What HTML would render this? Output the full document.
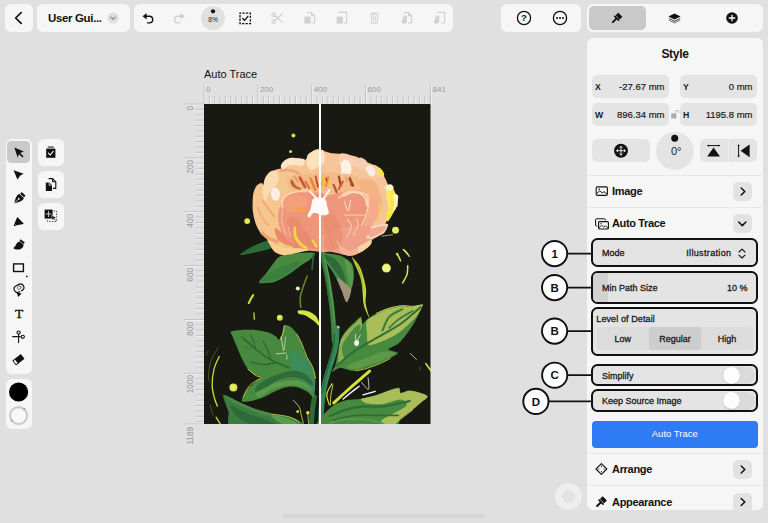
<!DOCTYPE html>
<html lang="en">
<head>
<meta charset="utf-8">
<title>Auto Trace</title>
<style>
*{box-sizing:border-box;margin:0;padding:0}
html,body{width:768px;height:523px;overflow:hidden;background:#e0e0e0;font-family:"Liberation Sans",sans-serif;color:#111}
#app{position:relative;width:768px;height:523px;background:#e0e0e0;overflow:hidden}
.abs{position:absolute}
.pill{position:absolute;background:#f6f6f6;border-radius:6px}
.fld{position:absolute;background:#e4e4e4;border-radius:5px;height:23px;font-size:9.5px;line-height:23px;color:#1a1a1a}
.fld b{position:absolute;left:3px;top:.7px;font-weight:bold;font-size:8.7px}
.fld span{position:absolute;right:4.5px;top:0;white-space:nowrap;-webkit-text-stroke:.2px #1a1a1a}
.sec{position:absolute;left:612px;font-weight:bold;font-size:12px;letter-spacing:-.55px;line-height:14px;white-space:nowrap;color:#111}
.chev{position:absolute;left:733px;width:19px;height:19px;border-radius:5px;background:#e2e2e2}
.sep{position:absolute;left:587px;width:176px;height:1px;background:#e9e9e9}
.box{position:absolute;left:590.8px;width:166.8px;border:2px solid #111;border-radius:6.5px;background:#e4e4e4;overflow:hidden}
.lbl{position:absolute;font-size:9px;line-height:12px;white-space:nowrap;color:#1a1a1a;-webkit-text-stroke:.3px #1a1a1a}
.call{position:absolute;width:27px;height:27px;border-radius:50%;border:1.8px solid #111;background:#fff;font-weight:bold;font-size:11.5px;line-height:24px;text-align:center;color:#111}
.cline{position:absolute;height:1.7px;background:#111}
.rl{position:absolute;font-size:8px;line-height:8px;color:#9a9a9a;white-space:nowrap}
.vl{position:absolute;font-size:8.2px;line-height:8px;color:#959595;white-space:nowrap;transform-origin:100% 0;transform:rotate(-90deg);text-align:right}
</style>
</head>
<body>
<div id="app">
<!-- top toolbar -->
<div class="pill" style="left:5px;top:4px;width:28px;height:28px"></div>
<svg class="abs" style="left:5px;top:4px" width="28" height="28" viewBox="0 0 28 28"><path d="M16.2 8.6 L10.6 14 L16.2 19.4" fill="none" stroke="#111" stroke-width="1.7" stroke-linecap="round" stroke-linejoin="round"/></svg>
<div class="pill" style="left:37px;top:4px;width:92.5px;height:28px"></div>
<div class="abs" style="left:48px;top:10.5px;font-weight:bold;font-size:11.5px;letter-spacing:-.35px;line-height:14px;white-space:nowrap">User Gui...</div>
<svg class="abs" style="left:107px;top:12px" width="12" height="12" viewBox="0 0 12 12"><circle cx="6" cy="6" r="5.6" fill="#dedede"/><path d="M3.7 5.1 L6 7.3 L8.3 5.1" fill="none" stroke="#8d8d8d" stroke-width="1.2" stroke-linecap="round" stroke-linejoin="round"/></svg>

<div class="pill" style="left:134px;top:4px;width:319px;height:28px"></div>
<svg class="abs" style="left:134px;top:4px" width="319" height="28" viewBox="134 4 319 28">
 <!-- undo -->
 <g fill="none" stroke="#111" stroke-width="1.4" stroke-linecap="round" stroke-linejoin="round">
  <path d="M144.6 16.3 H149.4 A3.3 3.3 0 0 1 149.4 22.9 H147.6"/>
 </g>
 <path d="M142.6 16.3 L146.6 13 V19.6 Z" fill="#111"/>
 <!-- redo (disabled) -->
 <g fill="none" stroke="#cdcdcd" stroke-width="1.4" stroke-linecap="round" stroke-linejoin="round">
  <path d="M182.6 16.3 H177.8 A3.3 3.3 0 0 0 177.8 22.9 H179.6"/>
 </g>
 <path d="M184.6 16.3 L180.6 13 V19.6 Z" fill="#cdcdcd"/>
 <!-- zoom -->
 <circle cx="213" cy="18" r="12" fill="#e0e0e0"/>
 <circle cx="213" cy="11.3" r="2.1" fill="#111"/>
 <text x="213" y="22.4" font-size="6.6" text-anchor="middle" fill="#222" font-family="Liberation Sans, sans-serif">8%</text>
 <!-- select all -->
 <rect x="240" y="13.2" width="10.4" height="10.4" fill="none" stroke="#111" stroke-width="1.3" stroke-dasharray="2.3 1.2" stroke-dashoffset="1.1"/>
 <path d="M242.8 18.5 L244.6 20.4 L247.9 16.3" fill="none" stroke="#111" stroke-width="1.3" stroke-linecap="round" stroke-linejoin="round"/>
 <!-- scissors -->
 <g fill="none" stroke="#cfcfcf" stroke-width="1.2" stroke-linecap="round">
  <circle cx="273.6" cy="14.8" r="1.7"/><circle cx="273.6" cy="21.6" r="1.7"/>
  <path d="M275 15.8 L282.3 22.4 M275 20.6 L282.3 13.8"/>
 </g>
 <!-- copy -->
 <g fill="none" stroke="#d2d2d2" stroke-width="1.1" stroke-linejoin="round">
  <path d="M307 12.6 H311.6 L314.6 15.6 V23 H311.4"/>
  <path d="M311.6 12.6 V15.6 H314.6"/>
 </g>
 <path d="M304.4 16.6 H310.6 V23.6 H304.4 Z" fill="#d2d2d2"/>
 <!-- paste -->
 <g fill="none" stroke="#d2d2d2" stroke-width="1.1" stroke-linejoin="round">
  <path d="M338.4 12.4 H346.6 V23 H343.6"/>
 </g>
 <path d="M336.6 16.6 H342.8 V23.6 H336.6 Z" fill="#d2d2d2"/>
 <!-- trash -->
 <g fill="none" stroke="#d6d6d6" stroke-width="1.1" stroke-linejoin="round" stroke-linecap="round">
  <path d="M370.4 14.4 H378.4 M372.6 14.2 V12.8 H376.2 V14.2"/>
  <path d="M371 14.6 L371.6 23.4 H377.2 L377.8 14.6"/>
  <path d="M373.3 16.6 V21.4 M375.5 16.6 V21.4"/>
 </g>
 <!-- paste style 1 -->
 <g fill="none" stroke="#d2d2d2" stroke-width="1.1" stroke-linejoin="round">
  <path d="M404 12.6 H408.6 L411.6 15.6 V23 H408"/>
  <path d="M408.6 12.6 V15.6 H411.6"/>
 </g>
 <circle cx="404.2" cy="21" r="2.6" fill="#cfcfcf"/><path d="M403 15.6 h4 v5 h-4z" fill="#d4d4d4"/>
 <!-- paste style 2 -->
 <g fill="none" stroke="#d2d2d2" stroke-width="1.1" stroke-linejoin="round">
  <path d="M437 12.4 H444.6 V23 H441"/>
 </g>
 <circle cx="436.6" cy="21" r="2.6" fill="#cfcfcf"/><path d="M435.4 15.6 h4 v5 h-4z" fill="#d4d4d4"/>
</svg>

<div class="pill" style="left:501px;top:4px;width:80px;height:28px"></div>
<svg class="abs" style="left:501px;top:4px" width="80" height="28" viewBox="501 4 80 28">
 <circle cx="524" cy="18" r="6.6" fill="none" stroke="#111" stroke-width="1.3"/>
 <text x="524" y="21.3" font-size="9.5" font-weight="bold" text-anchor="middle" fill="#111" font-family="Liberation Sans, sans-serif">?</text>
 <circle cx="560" cy="18" r="6.6" fill="none" stroke="#111" stroke-width="1.3"/>
 <circle cx="557" cy="18" r="1" fill="#111"/><circle cx="560" cy="18" r="1" fill="#111"/><circle cx="563" cy="18" r="1" fill="#111"/>
</svg>

<div class="pill" style="left:587px;top:4px;width:176px;height:28px"></div>
<div class="abs" style="left:589px;top:6px;width:57px;height:24px;border-radius:5px;background:#c9c9c9"></div>
<svg class="abs" style="left:587px;top:4px" width="176" height="28" viewBox="587 4 176 28">
 <!-- brush -->
 <g transform="translate(616.8 18.2) rotate(45) scale(.8)">
  <path d="M-3.6 -6.2 H3.6 V-1.4 H-3.6 Z" fill="#111"/>
  <path d="M-4.2 -0.8 H4.2 V1.2 H1.2 V7 A1.2 1.2 0 0 1 -1.2 7 V1.2 H-4.2 Z" fill="#111"/>
 </g>
 <!-- layers -->
 <path d="M674.5 13.6 L680.6 16.6 L674.5 19.6 L668.4 16.6 Z" fill="#111"/>
 <path d="M669.4 18.3 L674.5 20.8 L679.6 18.3 L680.6 18.8 L674.5 21.8 L668.4 18.8 Z" fill="#333"/>
 <path d="M669.4 19.9 L674.5 22.4 L679.6 19.9 L680.6 20.4 L674.5 23.4 L668.4 20.4 Z" fill="#777"/>
 <!-- plus -->
 <circle cx="732" cy="18" r="5.8" fill="#111"/>
 <path d="M732 15.2 V20.8 M729.2 18 H734.8" stroke="#fff" stroke-width="1.3" stroke-linecap="round"/>
</svg>
<!-- left toolbar -->
<div class="pill" style="left:5.5px;top:138.5px;width:26px;height:235px;border-radius:6px"></div>
<div class="abs" style="left:7px;top:140.5px;width:23px;height:22.5px;border-radius:4.5px;background:#c9c9c9"></div>
<svg class="abs" style="left:5px;top:138px" width="28" height="236" viewBox="5 138 28 236">
 <!-- select arrow -->
 <path d="M14.4 147.4 L23.8 151.6 L20.2 153 L23.6 156.6 L22.6 157.6 L19 154.2 L17.6 157.4 Z" fill="#111"/>
 <!-- direct select -->
 <path d="M13.6 170.3 L23.6 173.8 L20.3 175.6 L17.4 179.6 Z" fill="#111"/>
 <!-- pen -->
 <g transform="translate(19 198.6) rotate(45)">
  <path d="M-2.6 -6.6 H2.6 V-4.4 H-2.6 Z" fill="#111"/>
  <path d="M-3.3 -3.7 H3.3 C4.2 -0.6 2.6 3.2 0 6.6 C-2.6 3.2 -4.2 -0.6 -3.3 -3.7 Z" fill="#111"/>
  <path d="M0 6 V1.4" stroke="#f5f5f5" stroke-width=".8"/><circle cx="0" cy="0.4" r="1" fill="#f5f5f5"/>
 </g>
 <!-- node tool -->
 <g transform="translate(6 186) scale(.134)">
  <path d="M84 232 L128 276 L132 284 L80 292 L62 300 L58 292 Z" fill="#111"/>
  <path d="M66 282 L74 290" stroke="#f5f5f5" stroke-width="4"/>
 </g>
 <!-- blob brush -->
 <g transform="translate(6 186) scale(.134)">
  <path d="M54 462 C70 455 72 440 82 426 C92 412 110 412 122 424 C136 438 132 458 114 468 C96 478 66 476 54 462 Z" fill="#111"/>
  <path d="M108 398 L140 420 L132 432 L100 410 Z" fill="#111"/>
  <path d="M100 412 L128 432" stroke="#f5f5f5" stroke-width="3.5"/>
 </g>
 <!-- rectangle -->
 <rect x="13.6" y="263.9" width="9.8" height="7.6" fill="none" stroke="#111" stroke-width="1.4"/>
 <circle cx="26.9" cy="276.4" r=".9" fill="#222"/>
 <!-- lasso -->
 <g fill="none" stroke="#111" stroke-width="1.2" stroke-linecap="round" stroke-linejoin="round">
  <g transform="translate(18.9 288.2) rotate(-28)"><path d="M-1 3.4 H-1.6 A3.4 3.4 0 0 1 -1.6 -3.4 H1.8 A3.4 3.4 0 0 1 1.8 3.4 H1.2"/><ellipse cx="0.6" cy="-.3" rx="2" ry="1.5" stroke-width=".8" stroke="#555"/></g>
 </g>
 <path d="M16.6 292.2 L21.6 293.4 L18.2 297 Z" fill="#111"/>
 <!-- text -->
 <text x="19" y="318.3" font-family="Liberation Serif, serif" font-size="13.5" text-anchor="middle" fill="#111" stroke="#111" stroke-width=".35">T</text>
 <!-- scissors tool -->
 <g fill="none" stroke="#111" stroke-width="1.1" stroke-linecap="round">
  <path d="M12.6 336.6 H19 M18.6 337 V342.6"/>
  <circle cx="18.6" cy="332.6" r="1.6"/><circle cx="22.8" cy="336.8" r="1.6"/>
  <path d="M18.6 334.4 V336.4 M21 336.8 H19"/>
 </g>
 <!-- eraser -->
 <g transform="translate(18.4 359.8) rotate(-38)">
  <path d="M-5.4 -3 H5.4 V3 H-5.4 Z" fill="#111"/>
  <path d="M-4.6 -2.1 H-2.6 V2.1 H-4.6 Z" fill="#f5f5f5"/>
 </g>
</svg>
<!-- secondary buttons -->
<div class="pill" style="left:37.5px;top:138.5px;width:26.5px;height:27px;border-radius:6px"></div>
<div class="pill" style="left:37.5px;top:170.5px;width:26.5px;height:27px;border-radius:6px"></div>
<div class="pill" style="left:37.5px;top:202.5px;width:26.5px;height:27px;border-radius:6px"></div>
<svg class="abs" style="left:37px;top:138px" width="28" height="92" viewBox="37 138 28 92">
 <!-- paste in place -->
 <path d="M46.2 148.6 H55.4 V157.8 H46.2 Z" fill="#111"/>
 <path d="M47.8 146.2 H53.8 V148 H47.8 Z" fill="#777"/>
 <path d="M48.4 153.2 L50.2 155 L53.2 151.4" fill="none" stroke="#fff" stroke-width="1.1" stroke-linecap="round" stroke-linejoin="round"/>
 <!-- duplicate -->
 <g fill="none" stroke="#111" stroke-width="1.1" stroke-linejoin="round">
  <path d="M48.6 178.6 H52.6 L55.8 181.8 V188.4 H53"/>
  <path d="M52.6 178.6 V181.8 H55.8"/>
 </g>
 <path d="M45.8 182.4 H49.4 L52 185 V191 H45.8 Z" fill="#111"/>
 <path d="M49.2 182.6 V185.2 H51.8" fill="none" stroke="#f5f5f5" stroke-width=".8"/>
 <!-- select same -->
 <path d="M44.6 209.6 H52.6 V218.6 H44.6 Z" fill="#111"/>
 <path d="M48.6 211 V217 M45.8 214 H51.4" stroke="#f5f5f5" stroke-width=".8"/>
 <path d="M53.6 211 H56.6 V221.6 H47.6 V219.6" fill="none" stroke="#555" stroke-width="1" stroke-dasharray="1.6 1.2"/>
 <path d="M51.4 215.4 L56.4 217.4 L54.4 218.2 L55.8 220 L55 220.6 L53.6 218.8 L52.4 220.2 Z" fill="#111" stroke="#f5f5f5" stroke-width=".4"/>
</svg>
<!-- colour wells -->
<div class="pill" style="left:5.5px;top:379px;width:26px;height:50px;border-radius:6px"></div>
<svg class="abs" style="left:5px;top:379px" width="28" height="50" viewBox="5 379 28 50">
 <circle cx="18.6" cy="392" r="9.6" fill="#000"/>
 <circle cx="18.6" cy="415.6" r="8.5" fill="#f8f8f8" stroke="#cbcbcb" stroke-width="2.1"/>
 <path d="M23.6 408.6 A8.5 8.5 0 0 1 24.8 409.8" fill="none" stroke="#c98a8a" stroke-width="2.1"/>
 <path d="M12.2 421.2 A8.5 8.5 0 0 1 11.4 420.2" fill="none" stroke="#c98a8a" stroke-width="2.1"/>
</svg>
<!-- right panel -->
<div class="abs" style="left:587px;top:38px;width:176px;height:472px;background:#f6f6f6;border-radius:6px"></div>
<div class="abs" style="left:587px;top:46.5px;width:176px;text-align:center;font-weight:bold;font-size:12px;letter-spacing:-.3px;line-height:14px">Style</div>
<div class="fld" style="left:592px;top:75px;width:77px"><b>X</b><span>-27.67 mm</span></div>
<div class="fld" style="left:680px;top:75px;width:77px"><b>Y</b><span>0 mm</span></div>
<div class="fld" style="left:592px;top:103px;width:77px"><b>W</b><span>896.34 mm</span></div>
<div class="fld" style="left:680px;top:103px;width:77px"><b>H</b><span>1195.8 mm</span></div>
<svg class="abs" style="left:669px;top:107.9px" width="11" height="13" viewBox="0 0 11 13"><path d="M2.2 5.4 H7.4 V10.5 H2.2 Z" fill="#adadad"/><path d="M6.4 5.2 V4.2 A1.7 1.7 0 0 1 9.8 4 V4.8" fill="none" stroke="#b8b8b8" stroke-width=".9"/></svg>
<div class="abs" style="left:592px;top:139px;width:58px;height:23px;border-radius:5px;background:#e4e4e4"></div>
<div class="abs" style="left:655.5px;top:131.5px;width:38.5px;height:38.5px;border-radius:50%;background:#e4e4e4"></div>
<div class="abs" style="left:699.5px;top:139px;width:57.5px;height:23px;border-radius:5px;background:#e4e4e4"></div>
<div class="abs" style="left:728px;top:139px;width:1px;height:23px;background:#ededed"></div>
<div class="abs" style="left:657px;top:144.5px;width:38.5px;text-align:center;font-size:11px;line-height:13px;color:#222">0°</div>
<svg class="abs" style="left:587px;top:130px" width="176" height="42" viewBox="587 130 176 42">
 <circle cx="621" cy="150.7" r="7" fill="#111"/>
 <g fill="none" stroke="#f5f5f5" stroke-width=".9" stroke-linecap="round" stroke-linejoin="round">
  <path d="M621 146.4 V155 M616.7 150.7 H625.3"/>
  <path d="M619.8 147.5 L621 146.3 L622.2 147.5 M619.8 153.9 L621 155.1 L622.2 153.9 M617.9 149.5 L616.7 150.7 L617.9 151.9 M624.1 149.5 L625.3 150.7 L624.1 151.9"/>
 </g>
 <circle cx="674.7" cy="138.2" r="3.5" fill="#111"/>
 <!-- flip vertical -->
 <path d="M713.6 147.6 L720 156.6 H707.2 Z" fill="#111"/>
 <path d="M707.6 145.6 H719.6" stroke="#111" stroke-width="1"/>
 <path d="M707 145.6 L708.8 144.4 V146.8 Z M720.2 145.6 L718.4 144.4 V146.8 Z" fill="#111"/>
 <!-- flip horizontal -->
 <path d="M740.6 150.8 L749.6 144.4 V157.2 Z" fill="#111"/>
 <path d="M738.6 145 V156.8" stroke="#111" stroke-width="1"/>
 <path d="M738.6 144.2 L737.4 146 H739.8 Z M738.6 157.4 L737.4 155.6 H739.8 Z" fill="#111"/>
</svg>
<div class="sep" style="top:175px"></div>
<svg class="abs" style="left:594px;top:185px" width="16" height="12" viewBox="594 185 16 12"><rect x="596.2" y="186.9" width="11.2" height="8.5" rx="1.2" fill="none" stroke="#111" stroke-width="1.1"/><path d="M596.6 193.6 L599.8 190.8 L602.2 193 L604 191.6 L607.2 194.2" fill="none" stroke="#111" stroke-width="1"/><circle cx="599.2" cy="189.2" r=".8" fill="#111"/></svg>
<div class="sec" style="top:184px;font-size:11px;letter-spacing:-.3px">Image</div>
<div class="chev" style="top:182px"></div>
<div class="sep" style="top:207px"></div>
<svg class="abs" style="left:594px;top:217px" width="16" height="14" viewBox="594 217 16 14"><path d="M597.4 226 H596.4 A.8 .8 0 0 1 595.6 225.2 V219.6 A.8 .8 0 0 1 596.4 218.8 H604.6 A.8 .8 0 0 1 605.4 219.6 V220.4" fill="none" stroke="#111" stroke-width="1"/><rect x="598.6" y="221.6" width="9.8" height="7.4" rx="1" fill="none" stroke="#111" stroke-width="1.1"/><path d="M599 227.6 L601.6 225.2 L603.6 227 L605.2 225.8 L608 228" fill="none" stroke="#111" stroke-width=".9"/><circle cx="601" cy="223.6" r=".7" fill="#111"/></svg>
<div class="sec" style="top:216px;font-size:11px;letter-spacing:-.35px">Auto Trace</div>
<div class="chev" style="top:214px"></div>
<svg class="abs" style="left:733px;top:182px" width="19" height="51" viewBox="733 182 19 51" fill="none" stroke="#111" stroke-width="1.5" stroke-linecap="round" stroke-linejoin="round"><path d="M741.2 188 L744.8 191.5 L741.2 195"/><path d="M738.7 222 L742.3 225.6 L745.9 222"/></svg>

<div class="box" style="top:238.4px;height:29.1px"></div>
<div class="lbl" style="left:602px;top:247.1px">Mode</div>
<div class="lbl" style="right:36.6px;top:247.1px;letter-spacing:.35px">Illustration</div>
<svg class="abs" style="left:736px;top:247px" width="12" height="13" viewBox="0 0 12 13" fill="none" stroke="#111" stroke-width="1.1" stroke-linecap="round" stroke-linejoin="round"><path d="M3 5 L6 2.2 L9 5 M3 8.2 L6 11 L9 8.2"/></svg>

<div class="box" style="top:270.5px;height:33.6px"><i style="position:absolute;left:0;top:0;bottom:0;width:15.5px;background:#d2d2d2"></i></div>
<div class="lbl" style="left:602px;top:281.5px">Min Path Size</div>
<div class="lbl" style="right:20.5px;top:281.5px">10 %</div>

<div class="box" style="top:307.3px;height:48.6px"></div>
<div class="lbl" style="left:596.3px;top:312.5px;letter-spacing:.1px">Level of Detail</div>
<div class="abs" style="left:596.5px;top:327px;width:156px;height:22.5px;border-radius:4px;background:#dcdcdc"></div>
<div class="abs" style="left:649px;top:327px;width:52px;height:22.5px;border-radius:3px;background:#cdcdcd"></div>
<div class="lbl" style="left:596.5px;width:52.5px;top:332.5px;text-align:center">Low</div>
<div class="lbl" style="left:649px;width:52px;top:332.5px;text-align:center">Regular</div>
<div class="lbl" style="left:701px;width:52px;top:332.5px;text-align:center">High</div>

<div class="box" style="top:364.1px;height:22.2px"></div>
<div class="lbl" style="left:602px;top:369.5px">Simplify</div>
<div class="abs" style="left:721.5px;top:366.5px;width:33.5px;height:17.5px;border-radius:9px;background:#dadada"></div>
<div class="abs" style="left:722.5px;top:366.8px;width:17px;height:17px;border-radius:50%;background:#fdfdfd;box-shadow:0 .5px 1.5px rgba(0,0,0,.18)"></div>
<div class="box" style="top:389.2px;height:22.8px"></div>
<div class="lbl" style="left:602px;top:395px">Keep Source Image</div>
<div class="abs" style="left:721.5px;top:392px;width:33.5px;height:17.5px;border-radius:9px;background:#dadada"></div>
<div class="abs" style="left:722.5px;top:392.3px;width:17px;height:17px;border-radius:50%;background:#fdfdfd;box-shadow:0 .5px 1.5px rgba(0,0,0,.18)"></div>

<div class="abs" style="left:592px;top:421px;width:165.5px;height:26.5px;border-radius:4px;background:#2f7bf6;color:#fff;font-size:9.5px;line-height:26.5px;text-align:center">Auto Trace</div>
<div class="sep" style="top:453px"></div>
<svg class="abs" style="left:594px;top:462px" width="16" height="14" viewBox="594 462 16 14"><path d="M601.4 463.6 L606.8 469 L601.4 474.4 L596 469 Z" fill="none" stroke="#111" stroke-width="1.1" stroke-linejoin="round"/><g fill="#111"><circle cx="601.4" cy="466.4" r=".6"/><circle cx="601.4" cy="471.6" r=".6"/><circle cx="598.8" cy="469" r=".6"/><circle cx="604" cy="469" r=".6"/></g></svg>
<div class="sec" style="top:462px;font-size:11px;letter-spacing:-.3px">Arrange</div>
<div class="chev" style="top:460px"></div>
<div class="sep" style="top:485px"></div>
<svg class="abs" style="left:594px;top:495px" width="16" height="14" viewBox="594 495 16 14"><g transform="translate(601.2 502) rotate(45) scale(.82)"><path d="M-3.6 -6.2 H3.6 V-1.4 H-3.6 Z" fill="#111"/><path d="M-4.2 -0.8 H4.2 V1.2 H1.2 V7 A1.2 1.2 0 0 1 -1.2 7 V1.2 H-4.2 Z" fill="#111"/></g></svg>
<div class="sec" style="top:494.5px;font-size:11px;letter-spacing:-.3px">Appearance</div>
<div class="chev" style="top:492.5px"></div>
<svg class="abs" style="left:733px;top:460px" width="19" height="52" viewBox="733 460 19 52" fill="none" stroke="#111" stroke-width="1.5" stroke-linecap="round" stroke-linejoin="round"><path d="M741.2 466 L744.8 469.5 L741.2 473"/><path d="M741.2 498.5 L744.8 502 L741.2 505.5"/></svg>

<!-- callouts -->
<svg class="abs" style="left:520px;top:236px" width="74" height="182" viewBox="520 236 74 182">
 <g stroke="#111" stroke-width="1.7" fill="none">
  <path d="M567 253.6H592M567 287.6H592M567 331.1H592M567 375.2H592M549 401.4H592"/>
 </g>
 <g stroke="#111" stroke-width="1.9" fill="#fff">
  <circle cx="554.6" cy="253.6" r="12.6"/><circle cx="554.6" cy="287.6" r="12.6"/><circle cx="554.6" cy="331.1" r="12.6"/><circle cx="554.7" cy="375.2" r="12.6"/><circle cx="535.9" cy="401.4" r="12.6"/>
 </g>
 <g font-family="Liberation Sans, sans-serif" font-weight="bold" font-size="11.5" text-anchor="middle" fill="#111">
  <text x="554.6" y="257.7">1</text><text x="554.6" y="291.7">B</text><text x="554.6" y="335.2">B</text><text x="554.7" y="379.3">C</text><text x="535.9" y="405.5">D</text>
 </g>
</svg>
<!-- joystick -->
<div class="abs" style="left:554.5px;top:483px;width:27px;height:27px;border-radius:50%;background:#eeeeee"></div>
<div class="abs" style="left:561.5px;top:490px;width:13px;height:13px;border-radius:50%;background:#e2e2e2"></div>
<!-- scroll bar -->
<div class="abs" style="left:282px;top:513.8px;width:203px;height:4px;border-radius:2px;background:#d6d6d6"></div>
<!-- rulers -->
<div class="abs" style="left:204px;top:67px;font-size:11px;line-height:14px;color:#111;white-space:nowrap">Auto Trace</div>
<svg class="abs" style="left:180px;top:80px" width="270" height="372" viewBox="180 80 270 372"><path d="M204.00 84.5V104M209.39 96V104M214.77 96V104M220.16 96V104M225.55 96V104M230.93 96V104M236.32 96V104M241.71 96V104M247.09 96V104M252.48 96V104M257.86 84.5V104M263.25 96V104M268.64 96V104M274.02 96V104M279.41 96V104M284.80 96V104M290.18 96V104M295.57 96V104M300.96 96V104M306.34 96V104M311.73 84.5V104M317.12 96V104M322.50 96V104M327.89 96V104M333.27 96V104M338.66 96V104M344.05 96V104M349.43 96V104M354.82 96V104M360.21 96V104M365.59 84.5V104M370.98 96V104M376.37 96V104M381.75 96V104M387.14 96V104M392.53 96V104M397.91 96V104M403.30 96V104M408.68 96V104M414.07 96V104M419.46 96V104M424.84 96V104M430.23 96V104M430.50 84.5V104M184 104.00H204M196 109.39H204M196 114.77H204M196 120.16H204M196 125.55H204M196 130.93H204M196 136.32H204M196 141.71H204M196 147.09H204M196 152.48H204M184 157.86H204M196 163.25H204M196 168.64H204M196 174.02H204M196 179.41H204M196 184.80H204M196 190.18H204M196 195.57H204M196 200.96H204M196 206.34H204M184 211.73H204M196 217.12H204M196 222.50H204M196 227.89H204M196 233.27H204M196 238.66H204M196 244.05H204M196 249.43H204M196 254.82H204M196 260.21H204M184 265.59H204M196 270.98H204M196 276.37H204M196 281.75H204M196 287.14H204M196 292.53H204M196 297.91H204M196 303.30H204M196 308.68H204M196 314.07H204M184 319.46H204M196 324.84H204M196 330.23H204M196 335.62H204M196 341.00H204M196 346.39H204M196 351.78H204M196 357.16H204M196 362.55H204M196 367.94H204M184 373.32H204M196 378.71H204M196 384.10H204M196 389.48H204M196 394.87H204M196 400.25H204M196 405.64H204M196 411.03H204M196 416.41H204M196 421.80H204M184 424.00H204" transform="translate(.8 .8)" stroke="#f4f4f4" stroke-width="1" fill="none"/><path d="M204.00 84.5V104M209.39 96V104M214.77 96V104M220.16 96V104M225.55 96V104M230.93 96V104M236.32 96V104M241.71 96V104M247.09 96V104M252.48 96V104M257.86 84.5V104M263.25 96V104M268.64 96V104M274.02 96V104M279.41 96V104M284.80 96V104M290.18 96V104M295.57 96V104M300.96 96V104M306.34 96V104M311.73 84.5V104M317.12 96V104M322.50 96V104M327.89 96V104M333.27 96V104M338.66 96V104M344.05 96V104M349.43 96V104M354.82 96V104M360.21 96V104M365.59 84.5V104M370.98 96V104M376.37 96V104M381.75 96V104M387.14 96V104M392.53 96V104M397.91 96V104M403.30 96V104M408.68 96V104M414.07 96V104M419.46 96V104M424.84 96V104M430.23 96V104M430.50 84.5V104M184 104.00H204M196 109.39H204M196 114.77H204M196 120.16H204M196 125.55H204M196 130.93H204M196 136.32H204M196 141.71H204M196 147.09H204M196 152.48H204M184 157.86H204M196 163.25H204M196 168.64H204M196 174.02H204M196 179.41H204M196 184.80H204M196 190.18H204M196 195.57H204M196 200.96H204M196 206.34H204M184 211.73H204M196 217.12H204M196 222.50H204M196 227.89H204M196 233.27H204M196 238.66H204M196 244.05H204M196 249.43H204M196 254.82H204M196 260.21H204M184 265.59H204M196 270.98H204M196 276.37H204M196 281.75H204M196 287.14H204M196 292.53H204M196 297.91H204M196 303.30H204M196 308.68H204M196 314.07H204M184 319.46H204M196 324.84H204M196 330.23H204M196 335.62H204M196 341.00H204M196 346.39H204M196 351.78H204M196 357.16H204M196 362.55H204M196 367.94H204M184 373.32H204M196 378.71H204M196 384.10H204M196 389.48H204M196 394.87H204M196 400.25H204M196 405.64H204M196 411.03H204M196 416.41H204M196 421.80H204M184 424.00H204" stroke="#bdbdbd" stroke-width=".8" fill="none"/></svg>
<div class="rl" style="left:206.0px;top:85.5px">0</div>
<div class="rl" style="left:259.9px;top:85.5px">200</div>
<div class="rl" style="left:313.7px;top:85.5px">400</div>
<div class="rl" style="left:367.6px;top:85.5px">600</div>
<div class="rl" style="left:432.5px;top:85.5px">841</div>
<div class="vl" style="right:581.0px;top:106.0px">0</div>
<div class="vl" style="right:581.0px;top:159.9px">200</div>
<div class="vl" style="right:581.0px;top:213.7px">400</div>
<div class="vl" style="right:581.0px;top:267.6px">600</div>
<div class="vl" style="right:581.0px;top:321.5px">800</div>
<div class="vl" style="right:581.0px;top:375.3px">1000</div>
<div class="vl" style="right:581.0px;top:427.0px">1189</div>
<!-- artboard -->
<svg class="abs" style="left:204px;top:104px" width="226.5" height="320" viewBox="204 104 226.5 320">
<rect x="204" y="104" width="226.5" height="320" fill="#191914"/>
<path d="M240.2 254.8C239.9 254.0 245.6 250.5 248.8 248.6C251.9 246.7 255.5 244.8 259.1 243.4C262.7 242.1 268.0 239.8 270.3 240.3C272.6 240.9 274.2 245.2 272.9 246.9C271.6 248.6 266.3 249.6 262.5 250.7C258.8 251.8 254.2 252.7 250.5 253.4C246.8 254.1 240.4 255.6 240.2 254.8Z" fill="#2c6b38"/>
<path d="M259.1 282.2C259.1 280.6 263.7 276.6 266.0 273.6C268.3 270.6 270.6 267.0 272.9 264.1C275.2 261.2 276.3 258.1 279.8 256.4C283.2 254.6 287.8 254.3 293.5 253.8C299.3 253.2 311.3 252.1 314.2 252.9C317.1 253.8 313.0 256.8 310.7 258.9C308.5 261.1 303.9 263.4 300.4 265.8C297.0 268.3 294.1 271.0 290.1 273.6C286.1 276.2 280.3 279.7 276.3 281.3C272.3 282.9 268.9 282.9 266.0 283.0C263.1 283.2 259.1 283.8 259.1 282.2Z" fill="#47893f"/>
<path d="M260.8 281.3C260.0 280.0 268.9 273.6 272.9 271.0C276.9 268.4 280.3 267.5 284.9 265.8C289.5 264.1 299.0 260.1 300.4 260.7C301.9 261.2 297.3 266.3 293.5 269.3C289.8 272.3 283.5 276.7 278.0 278.7C272.6 280.7 261.7 282.6 260.8 281.3Z" fill="#3a7f3e"/>
<path d="M321.8 253.4C323.0 252.1 330.9 253.8 334.2 254.3C337.5 254.9 341.1 255.6 343.8 257.2C346.5 258.8 350.9 261.7 352.4 264.9C353.9 268.0 354.0 274.2 353.8 278.2C353.5 282.3 351.9 288.0 350.9 291.6C349.8 295.2 348.0 302.6 346.7 302.3C345.3 302.1 343.8 293.9 341.9 289.7C340.0 285.5 336.5 278.4 334.2 274.4C332.0 270.4 328.5 266.1 326.6 262.9C324.7 259.8 320.7 254.7 321.8 253.4Z" fill="#47893f"/>
<path d="M337.1 278.2C337.7 277.3 343.2 281.8 345.3 283.6C347.4 285.4 350.9 287.3 351.1 290.1C351.3 292.9 348.1 302.3 346.7 302.3C345.2 302.3 342.9 293.7 341.5 290.1C340.1 286.5 336.5 279.2 337.1 278.2Z" fill="#a3917a"/>
<path d="M322.4 254.5C323.0 253.5 331.0 256.0 334.2 258.4C337.5 260.7 339.9 264.6 341.9 268.7C343.9 272.8 346.6 281.8 346.1 283.0C345.6 284.3 341.6 279.4 339.0 276.3C336.4 273.3 333.2 268.5 330.4 264.9C327.7 261.2 321.8 255.6 322.4 254.5Z" fill="#2c6b38"/>
<path d="M344.8 259.1C345.7 259.0 350.5 262.6 351.8 265.8C353.2 269.0 353.1 274.6 353.0 278.2C352.9 281.9 351.9 287.8 351.1 287.8C350.2 287.8 348.8 281.8 348.0 278.2C347.2 274.7 346.6 270.0 346.1 266.8C345.6 263.6 343.8 259.3 344.8 259.1Z" fill="#5a9a4c"/>
<path d="M322.4 253.4C322.8 255.3 323.8 260.7 324.7 264.9C325.5 269.0 326.4 271.9 327.6 278.2C328.7 284.6 330.4 295.8 331.4 303.1C332.3 310.4 332.8 315.9 333.3 322.2C333.8 328.6 334.1 338.2 334.2 341.4" fill="none" stroke="#3f8442" stroke-width="4.8" stroke-linecap="round" stroke-linejoin="round"/>
<path d="M320.9 255.3C321.2 257.2 322.3 262.8 323.2 266.8C324.0 270.8 324.8 273.1 325.8 279.2C326.9 285.3 328.9 299.1 329.5 303.1" fill="none" stroke="#2c6b38" stroke-width="1.4" stroke-linecap="round" stroke-linejoin="round"/>
<path d="M324.7 259.1C325.4 262.3 327.6 270.9 328.9 278.2C330.2 285.6 331.8 295.8 332.7 303.1C333.7 310.4 334.3 319.0 334.6 322.2" fill="none" stroke="#62a352" stroke-width="1.0" stroke-linecap="round" stroke-linejoin="round"/>
<path d="M336.7 328.1C336.6 330.8 336.7 339.3 335.9 344.3C335.2 349.4 333.6 353.8 332.3 358.5C330.9 363.2 329.2 368.0 327.8 372.7C326.5 377.4 325.2 381.5 324.2 386.9C323.1 392.3 322.3 398.9 321.7 405.1C321.1 411.4 320.7 421.2 320.5 424.4" fill="none" stroke="#34875a" stroke-width="5.5" stroke-linecap="round" stroke-linejoin="round"/>
<path d="M334.3 334.2C334.1 336.6 333.8 344.0 333.1 348.4C332.3 352.8 331.1 355.8 329.8 360.5C328.6 365.3 326.7 371.4 325.4 376.8C324.1 382.2 322.7 390.3 322.1 393.0" fill="none" stroke="#2c6b38" stroke-width="1.8" stroke-linecap="round" stroke-linejoin="round"/>
<path d="M314.5 397.0C314.1 399.1 313.0 404.6 312.5 409.2C311.9 413.8 311.6 421.9 311.4 424.4" fill="none" stroke="#2c6b38" stroke-width="5" stroke-linecap="round" stroke-linejoin="round"/>
<path d="M307.1 276.3C306.4 278.2 304.0 284.3 302.9 287.8C301.7 291.3 300.6 294.1 300.2 297.4C299.9 300.6 300.7 305.7 300.8 307.3" fill="none" stroke="#6a8a30" stroke-width="1.5" stroke-linecap="round" stroke-linejoin="round"/>
<path d="M313.6 253.4C313.5 254.7 313.1 258.4 312.8 261.0C312.6 263.7 312.2 267.7 312.1 269.1" fill="none" stroke="#2c6b38" stroke-width="1.6" stroke-linecap="round" stroke-linejoin="round"/>
<path d="M319.6 149.6C318.5 148.2 314.4 150.1 312.8 151.0C311.2 151.9 310.0 154.3 308.9 155.6C307.8 156.9 306.9 159.3 305.4 159.7C304.0 160.1 301.2 158.4 299.0 158.3C296.8 158.3 293.1 158.7 291.0 159.3C288.9 159.8 286.6 160.9 285.3 162.2C283.9 163.5 283.3 166.9 282.1 168.0C280.8 169.0 279.0 168.7 277.2 169.3C275.5 170.0 272.0 170.8 270.4 172.1C268.7 173.4 267.4 175.9 266.5 177.8C265.5 179.7 265.0 184.1 264.2 184.9C263.4 185.7 262.3 183.0 261.2 183.1C260.1 183.2 257.7 184.5 256.6 185.8C255.5 187.2 254.2 190.0 253.6 192.3C253.0 194.5 252.8 198.1 252.7 200.7C252.6 203.4 252.5 207.2 252.7 209.9C253.0 212.7 253.7 216.5 254.3 219.1C255.0 221.7 256.1 225.0 257.1 227.1C258.0 229.2 259.2 231.3 260.5 232.8C261.8 234.4 264.3 235.9 265.8 237.4C267.3 239.0 269.3 241.4 270.4 243.2C271.4 244.9 271.6 247.4 272.7 248.9C273.7 250.3 275.5 251.9 277.2 252.8C279.0 253.6 281.9 254.5 284.1 254.6C286.3 254.7 289.7 253.9 292.1 253.5C294.5 253.0 297.6 252.1 300.2 251.6C302.7 251.2 306.4 250.6 309.3 250.5C312.3 250.4 318.0 252.4 319.6 250.9C321.3 249.5 320.4 254.4 320.6 240.9C320.7 227.3 320.7 174.3 320.6 160.6C320.4 146.9 320.8 151.1 319.6 149.6Z" fill="#f5c68f"/>
<path d="M318.3 149.6C319.5 148.3 323.1 150.9 325.2 151.5C327.2 152.0 330.0 153.0 332.0 153.3C334.1 153.6 336.5 153.5 338.9 153.8C341.3 154.0 345.3 154.2 348.1 154.7C350.8 155.2 354.7 155.9 357.3 157.0C359.8 158.0 363.2 160.5 365.3 161.5C367.3 162.6 369.4 162.9 371.0 163.8C372.6 164.7 374.7 166.3 376.1 167.5C377.4 168.7 378.9 170.7 380.2 172.1C381.4 173.5 383.2 175.0 384.3 176.7C385.4 178.4 386.7 181.7 387.5 183.6C388.3 185.4 389.3 187.4 389.8 189.3C390.3 191.2 390.8 194.3 390.7 196.2C390.7 198.1 389.4 200.0 389.4 201.9C389.3 203.8 390.7 206.5 390.5 208.8C390.3 211.0 389.0 214.5 388.2 216.8C387.4 219.1 386.2 222.3 385.2 224.4C384.3 226.4 383.2 228.9 382.0 230.5C380.8 232.2 379.1 233.9 377.4 235.1C375.8 236.4 373.1 238.0 371.0 239.0C369.0 240.1 366.0 241.1 363.7 242.2C361.3 243.4 357.9 245.6 355.4 246.6C352.9 247.6 349.4 248.9 346.9 249.1C344.5 249.4 341.5 248.0 338.9 248.2C336.3 248.4 332.8 250.1 329.8 250.5C326.7 250.9 320.1 252.4 318.3 250.9C316.4 249.5 317.5 254.4 317.4 240.9C317.2 227.3 317.2 174.3 317.4 160.6C317.5 146.9 317.1 151.0 318.3 149.6Z" fill="#f6c49a"/>
<path d="M231.1 331.5C232.3 330.6 238.6 330.1 241.8 329.9C245.1 329.7 252.1 329.6 255.6 329.9C259.0 330.2 265.2 331.4 267.8 332.2C270.5 333.0 273.9 335.0 275.5 336.1C277.0 337.1 278.4 340.5 279.3 340.2C280.2 339.9 281.7 335.7 282.3 333.8C283.0 331.8 282.7 326.3 283.9 325.4C285.0 324.4 289.0 325.8 290.7 326.9C292.5 328.0 295.4 331.6 296.9 333.8C298.3 335.9 300.4 340.5 301.5 342.9C302.5 345.4 303.6 349.9 304.5 352.1C305.4 354.4 307.3 357.9 308.3 359.8C309.4 361.6 311.2 363.6 312.2 365.9C313.1 368.1 314.8 373.5 315.2 376.6C315.6 379.6 315.1 386.1 314.9 388.8C314.7 391.6 314.7 396.8 313.7 397.2C312.7 397.6 309.8 393.2 307.6 391.9C305.3 390.5 299.7 387.9 296.9 387.3C294.0 386.7 289.2 386.7 286.2 387.3C283.1 387.9 277.2 390.4 273.9 391.9C270.7 393.3 264.8 396.8 261.7 398.0C258.6 399.2 253.6 400.6 251.0 401.0C248.3 401.4 242.2 402.7 241.8 401.0C241.4 399.4 245.8 391.6 247.9 388.8C250.1 386.0 256.0 381.6 257.9 379.9C259.7 378.3 262.1 377.2 261.7 376.6C261.3 375.9 256.7 376.1 254.8 375.0C253.0 374.0 249.7 371.2 247.9 368.9C246.2 366.7 243.3 361.3 241.8 358.2C240.3 355.2 237.7 348.8 236.5 346.0C235.2 343.1 233.4 338.8 232.6 336.8C231.9 334.9 229.9 332.4 231.1 331.5Z" fill="#47893f"/>
<path d="M290.7 350.6C292.8 349.8 298.4 352.9 301.5 355.2C304.5 357.5 307.1 360.8 309.1 364.3C311.1 367.9 312.9 372.0 313.7 376.6C314.5 381.2 315.0 390.1 314.0 391.9C313.0 393.6 310.2 389.1 307.6 387.3C305.0 385.5 300.9 384.0 298.4 381.2C295.8 378.4 293.8 374.0 292.3 370.5C290.7 366.9 289.5 363.1 289.2 359.8C289.0 356.4 288.7 351.3 290.7 350.6Z" fill="#3d8a5a"/>
<path d="M255.6 393.4C257.4 391.4 265.3 386.4 270.9 384.2C276.5 382.1 283.6 380.7 289.2 380.4C294.8 380.1 300.6 380.8 304.5 382.7C308.5 384.6 312.9 391.1 312.9 391.9C312.9 392.6 308.5 388.4 304.5 387.3C300.6 386.1 294.3 384.7 289.2 385.0C284.1 385.2 278.8 386.9 273.9 388.8C269.1 390.7 263.2 395.7 260.2 396.5C257.1 397.2 253.8 395.4 255.6 393.4Z" fill="#5a9c4c"/>
<path d="M241.8 336.8C244.1 338.9 250.7 345.2 255.6 349.1C260.4 352.9 265.3 356.6 270.9 359.8C276.5 362.9 286.2 366.4 289.2 367.7" fill="none" stroke="#2d6a36" stroke-width="1.8" stroke-linecap="round" stroke-linejoin="round"/>
<path d="M250.2 334.5C250.9 335.9 253.2 340.5 254.1 342.9C254.9 345.4 255.3 348.0 255.6 349.1" fill="none" stroke="#2d6a36" stroke-width="1.2" stroke-linecap="round" stroke-linejoin="round"/>
<path d="M263.2 341.4C264.0 342.9 266.5 347.5 267.8 350.6C269.1 353.6 270.4 358.2 270.9 359.8" fill="none" stroke="#2d6a36" stroke-width="1.2" stroke-linecap="round" stroke-linejoin="round"/>
<path d="M251.0 362.0C253.0 362.5 259.1 364.5 263.2 364.6C267.3 364.8 273.4 363.1 275.5 362.8" fill="none" stroke="#2d6a36" stroke-width="1.5" stroke-linecap="round" stroke-linejoin="round"/>
<path d="M244.9 347.5 L250.2 348.4" fill="none" stroke="#2d6a36" stroke-width="0.8" stroke-linecap="round" stroke-linejoin="round"/>
<path d="M257.9 385.0C260.4 382.6 266.2 379.5 270.9 377.3C275.6 375.2 281.6 373.0 286.2 372.0C290.7 371.0 294.6 370.3 298.4 371.2C302.2 372.1 306.7 374.9 309.1 377.3C311.5 379.8 313.7 385.2 312.9 385.7C312.2 386.3 308.0 381.9 304.5 380.4C301.1 378.9 296.6 377.0 292.3 376.9C287.9 376.8 282.8 378.2 278.5 379.9C274.2 381.7 270.1 385.3 266.3 387.3C262.5 389.3 257.0 392.2 255.6 391.9C254.2 391.5 255.3 387.4 257.9 385.0Z" fill="#2e6c3a"/>
<path d="M247.9 369.2C249.3 370.3 254.2 374.5 256.3 375.8C258.5 377.2 262.1 375.7 260.9 377.3C259.8 379.0 252.4 382.4 249.5 385.7C246.5 389.1 244.1 395.3 243.0 397.2" fill="none" stroke="#c5d63c" stroke-width="0.9" stroke-linecap="round" stroke-linejoin="round"/>
<path d="M296.9 334.1C297.8 335.8 300.6 340.7 302.2 344.5C303.9 348.2 305.1 353.0 306.8 356.7C308.5 360.4 311.0 363.1 312.5 366.6C313.9 370.2 315.0 376.2 315.5 378.1" fill="none" stroke="#b9cf45" stroke-width="0.9" stroke-linecap="round" stroke-linejoin="round"/>
<path d="M284.6 326.1C284.3 327.4 283.6 331.5 282.8 333.8C282.0 336.0 280.5 338.6 280.0 339.6" fill="none" stroke="#c9d94a" stroke-width="0.9" stroke-linecap="round" stroke-linejoin="round"/>
<path d="M281.3 337.1C281.7 339.4 283.0 350.6 283.7 350.6C284.4 350.6 285.2 339.4 285.6 337.1" fill="none" stroke="#dfeccb" stroke-width="0.7" stroke-linecap="round" stroke-linejoin="round"/>
<path d="M276.2 353.9 L286.2 352.9" fill="none" stroke="#dfeccb" stroke-width="0.7" stroke-linecap="round" stroke-linejoin="round"/>
<path d="M286.9 354.9 L286.9 359.1" fill="none" stroke="#dfeccb" stroke-width="0.7" stroke-linecap="round" stroke-linejoin="round"/>
<path d="M223.3 395.0C224.3 393.6 232.2 398.8 236.4 400.7C240.6 402.5 249.5 407.0 254.7 408.8C259.8 410.6 269.8 413.1 275.0 414.3C280.1 415.5 289.3 416.4 293.2 417.7C297.1 419.1 302.7 422.8 304.3 424.4C306.0 426.0 314.7 428.8 305.4 429.5C296.0 430.1 244.7 431.9 234.4 429.5C224.1 427.0 229.8 415.8 228.3 411.2C226.8 406.6 222.2 396.4 223.3 395.0Z" fill="#3b7d3f"/>
<path d="M230.4 405.1C231.7 404.6 238.8 409.9 244.5 412.2C250.3 414.6 258.7 416.8 264.8 419.3C270.9 421.9 281.0 425.6 281.0 427.4C281.0 429.3 270.2 431.2 264.8 430.5C259.4 429.8 253.3 425.9 248.6 423.4C243.9 420.9 239.5 418.3 236.4 415.3C233.4 412.2 229.0 405.6 230.4 405.1Z" fill="#2c6a38"/>
<path d="M223.3 395.0C223.9 394.8 231.2 398.4 236.4 400.7C241.7 403.0 248.6 406.6 254.7 408.8C260.8 411.0 271.2 412.8 272.9 413.9C274.6 414.9 268.9 416.1 264.8 415.3C260.8 414.5 254.0 411.4 248.6 409.2C243.2 407.0 236.6 404.5 232.4 402.1C228.2 399.7 222.6 395.2 223.3 395.0Z" fill="#4a8a42"/>
<path d="M270.9 415.3C271.6 414.2 284.4 417.2 289.1 418.9C293.9 420.6 300.0 424.3 299.3 425.4C298.6 426.5 289.8 427.1 285.1 425.4C280.4 423.7 270.2 416.4 270.9 415.3Z" fill="#5a9c4c"/>
<path d="M272.9 414.3C275.6 414.7 284.7 415.5 289.1 416.9C293.5 418.2 297.6 421.5 299.3 422.4" fill="none" stroke="#c9d94a" stroke-width="0.8" stroke-linecap="round" stroke-linejoin="round"/>
<path d="M422.9 304.6C422.0 303.8 415.3 306.2 412.6 306.3C409.8 306.5 405.5 305.3 402.2 305.5C399.0 305.7 391.9 307.0 388.5 308.1C385.0 309.1 379.3 311.7 376.4 313.2C373.6 314.7 368.9 317.8 367.0 319.2C365.1 320.7 363.1 324.4 362.3 324.1C361.5 323.7 362.1 316.8 361.0 316.7C359.9 316.5 356.0 320.8 354.1 322.7C352.1 324.5 348.2 327.9 346.3 330.4C344.5 332.9 341.5 338.5 340.3 341.6C339.2 344.7 338.4 350.4 337.7 353.6C337.1 356.9 335.9 363.3 335.2 365.7C334.4 368.1 331.4 371.4 332.1 371.7C332.8 372.0 337.6 367.9 340.3 367.7C343.0 367.6 349.1 370.7 352.4 370.8C355.6 370.9 361.0 369.3 364.4 368.4C367.8 367.5 374.7 365.3 378.2 364.0C381.6 362.6 387.6 359.6 390.2 358.1C392.8 356.6 398.2 354.1 397.9 353.0C397.7 351.8 388.4 350.6 388.5 349.3C388.6 348.1 396.3 345.5 398.8 343.3C401.3 341.1 405.3 335.8 407.4 333.0C409.5 330.2 412.7 325.4 414.3 322.7C415.9 319.9 418.3 314.8 419.4 312.4C420.6 310.0 423.8 305.4 422.9 304.6Z" fill="#47893f"/>
<path d="M367.0 320.6C368.7 317.7 374.9 315.4 378.2 313.7C381.4 312.0 384.9 310.3 388.5 309.3C392.1 308.2 398.6 306.9 402.2 306.5C405.9 306.2 409.6 307.0 412.6 306.9C415.5 306.7 421.4 304.1 422.0 305.5C422.7 306.8 419.3 312.6 416.9 315.8C414.4 319.0 408.9 324.1 405.7 327.0C402.5 329.9 399.0 332.9 395.4 335.1C391.7 337.3 385.6 340.1 381.6 341.6C377.6 343.1 370.9 346.3 368.7 345.0C366.5 343.7 367.2 336.7 367.0 333.0C366.7 329.3 365.3 323.5 367.0 320.6Z" fill="#a9bd58"/>
<path d="M340.3 341.6C341.8 336.0 344.6 333.7 347.2 330.6C349.8 327.4 353.6 324.7 355.8 322.7C358.0 320.6 359.6 317.7 360.6 318.4C361.6 319.1 362.6 324.0 361.8 327.0C361.0 330.0 357.9 333.1 355.8 336.4C353.6 339.7 350.9 343.0 348.9 346.8C346.9 350.5 345.5 355.9 343.8 358.8C342.0 361.7 339.2 366.8 338.6 364.0C338.0 361.1 338.9 347.2 340.3 341.6Z" fill="#8fb052"/>
<path d="M342.0 346.8C342.6 342.5 346.3 338.3 348.9 334.7C351.5 331.1 355.6 326.5 357.5 325.3C359.5 324.0 360.9 324.5 360.6 327.0C360.3 329.4 357.5 336.0 355.8 339.9C354.1 343.7 352.4 346.8 350.6 350.2C348.9 353.6 346.9 361.1 345.5 360.5C344.0 359.9 341.5 351.1 342.0 346.8Z" fill="#4a8a42"/>
<path d="M347.2 365.7C349.2 364.0 358.7 361.1 364.4 358.8C370.1 356.5 376.4 352.9 381.6 351.9C386.8 350.9 395.4 351.5 395.4 353.0C395.4 354.4 386.8 358.3 381.6 360.5C376.4 362.8 369.3 365.1 364.4 366.5C359.5 368.0 355.2 369.3 352.4 369.1C349.5 369.0 345.2 367.4 347.2 365.7Z" fill="#5d9a48"/>
<path d="M336.9 365.7C338.9 364.0 344.9 358.5 348.9 355.4C352.9 352.2 355.5 350.1 361.0 346.8C366.4 343.4 374.7 339.1 381.6 335.1C388.5 331.1 395.7 327.4 402.2 322.7C408.8 318.0 417.7 309.5 420.8 306.9" fill="none" stroke="#2f6e38" stroke-width="2.0" stroke-linecap="round" stroke-linejoin="round"/>
<path d="M382.5 330.4C383.6 328.1 386.0 320.2 389.3 316.7C392.6 313.1 400.1 310.5 402.2 309.3" fill="none" stroke="#3f7f3e" stroke-width="2.2" stroke-linecap="round" stroke-linejoin="round"/>
<path d="M389.3 327.8C390.9 326.4 394.9 322.0 398.8 319.2C402.7 316.4 410.3 312.4 412.6 311.0" fill="none" stroke="#3f7f3e" stroke-width="1.8" stroke-linecap="round" stroke-linejoin="round"/>
<path d="M376.4 313.4C378.4 312.6 384.2 309.7 388.5 308.4C392.8 307.1 398.2 306.0 402.2 305.7C406.3 305.3 409.2 306.5 412.6 306.3C415.9 306.2 420.9 305.0 422.5 304.8" fill="none" stroke="#d8e24a" stroke-width="0.8" stroke-linecap="round" stroke-linejoin="round"/>
<path d="M355.8 370.8C357.5 370.5 362.1 369.8 366.1 368.6C370.1 367.4 375.9 365.3 379.9 363.6C383.9 361.9 388.5 359.3 390.2 358.5" fill="none" stroke="#d8e24a" stroke-width="0.8" stroke-linecap="round" stroke-linejoin="round"/>

<path d="M354.4 341.6C354.9 340.7 355.8 339.9 356.7 339.9C357.6 339.9 358.5 340.6 358.9 341.6C359.3 342.6 359.1 343.8 358.6 344.7C358.0 345.6 357.0 346.1 356.1 346.1C355.3 346.0 354.8 345.2 354.4 344.4C354.1 343.5 354.0 342.5 354.4 341.6Z" fill="#f4f8ea"/>
<path d="M355.8 340.2 L355.5 334.4" fill="none" stroke="#f4f8ea" stroke-width="0.7" stroke-linecap="round" stroke-linejoin="round"/>
<path d="M357.5 340.2 L360.3 335.1" fill="none" stroke="#f4f8ea" stroke-width="0.7" stroke-linecap="round" stroke-linejoin="round"/>
<path d="M427.8 396.4C427.6 395.2 422.6 393.5 420.2 392.7C417.8 391.9 412.3 390.4 409.7 390.4C407.0 390.4 402.0 393.0 400.6 392.7C399.2 392.3 400.7 388.1 399.1 387.8C397.5 387.5 391.5 389.4 388.5 390.4C385.5 391.3 380.0 393.8 376.4 394.9C372.8 396.0 365.3 398.0 361.3 398.7C357.3 399.4 349.6 399.5 346.2 400.2C342.8 400.9 338.1 402.7 335.6 404.0C333.2 405.3 329.9 408.3 328.1 410.0C326.3 411.7 323.0 414.5 322.0 416.8C321.0 419.1 311.3 426.0 320.5 427.4C329.8 428.8 380.9 428.6 391.5 427.4C402.2 426.2 397.8 420.8 400.6 418.3C403.4 415.9 409.9 411.5 412.7 409.3C415.5 407.1 419.7 403.4 421.7 401.7C423.8 400.0 428.0 397.6 427.8 396.4Z" fill="#47893f"/>
<path d="M361.3 399.0C362.7 397.8 372.3 396.5 376.4 395.2C380.5 394.0 385.2 391.9 388.5 390.8C391.9 389.8 397.0 388.1 398.8 388.4C400.6 388.7 399.0 392.6 400.6 393.0C402.2 393.3 406.7 390.7 409.7 390.7C412.6 390.7 417.6 392.1 420.2 393.0C422.9 393.8 427.3 395.2 427.5 396.6C427.7 397.9 424.0 400.1 421.7 402.0C419.5 404.0 415.8 407.1 412.7 409.6C409.5 412.1 403.7 416.3 400.6 418.6C397.5 421.0 395.2 424.7 392.3 425.1C389.3 425.5 381.1 422.9 381.0 421.4C380.8 419.8 387.7 416.9 391.5 414.6C395.4 412.2 405.3 407.8 406.6 405.5C408.0 403.2 404.2 399.7 400.6 399.5C397.0 399.2 387.5 403.4 382.5 404.0C377.5 404.6 370.5 404.3 367.4 403.5C364.2 402.8 360.0 400.2 361.3 399.0Z" fill="#aabe58"/>
<path d="M329.6 416.1C332.4 415.0 340.9 411.2 346.2 409.6C351.5 408.0 355.0 407.1 361.3 406.6C367.6 406.0 375.9 407.2 384.0 406.3C392.0 405.3 405.4 402.0 409.7 401.1" fill="none" stroke="#2f6e38" stroke-width="2.2" stroke-linecap="round" stroke-linejoin="round"/>
<path d="M332.6 420.6C336.1 419.8 346.5 416.5 353.8 415.6C361.1 414.7 369.0 415.4 376.4 415.3C383.8 415.3 394.7 415.3 398.3 415.3" fill="none" stroke="#2f6e38" stroke-width="1.8" stroke-linecap="round" stroke-linejoin="round"/>
<path d="M329.6 422.9C332.4 422.2 339.9 419.6 346.2 419.1C352.5 418.6 361.3 419.2 367.4 419.8C373.4 420.5 379.9 422.6 382.5 423.2" fill="none" stroke="#5d9a48" stroke-width="1.6" stroke-linecap="round" stroke-linejoin="round"/>
<path d="M394.5 423.6C395.8 422.7 399.1 420.3 402.1 418.0C405.1 415.7 410.9 411.2 412.7 409.9" fill="none" stroke="#d8e24a" stroke-width="0.8" stroke-linecap="round" stroke-linejoin="round"/>
<path d="M369.6 371.2C367.7 372.8 362.2 377.5 358.3 380.9C354.4 384.2 350.3 387.8 346.2 391.5C342.1 395.1 335.9 401.0 333.8 402.9" fill="none" stroke="#d5e23c" stroke-width="3.0" stroke-linecap="round" stroke-linejoin="round"/>
<path d="M359.1 386.3C357.7 387.4 353.4 390.5 350.7 392.7C348.1 394.8 344.4 397.9 343.2 399.0" fill="none" stroke="#ffffff" stroke-width="1.4" stroke-linecap="round" stroke-linejoin="round"/>
<path d="M368.1 377.6C368.2 379.5 369.5 388.5 368.4 389.3C367.3 390.1 362.8 383.5 361.6 382.4" fill="none" stroke="#e8ece8" stroke-width="0.8" stroke-linecap="round" stroke-linejoin="round"/>
<path d="M363.1 394.8 L375.2 391.3" fill="none" stroke="#ffffff" stroke-width="1.4" stroke-linecap="round" stroke-linejoin="round"/>
<path d="M331.9 383.9C331.0 385.6 327.3 390.6 326.9 394.2C326.4 397.7 328.9 403.2 329.3 405.0" fill="none" stroke="#d5e23c" stroke-width="1.2" stroke-linecap="round" stroke-linejoin="round"/>
<path d="M332.9 385.1C332.6 386.9 331.2 392.4 330.8 395.7C330.4 399.0 330.6 403.5 330.5 405.0" fill="none" stroke="#d5e23c" stroke-width="0.9" stroke-linecap="round" stroke-linejoin="round"/>
<path d="M266.9 238.6C267.3 238.0 270.9 242.8 273.8 244.3C276.7 245.8 280.3 247.2 284.1 247.7C287.9 248.3 292.5 247.4 296.7 247.7C300.9 248.0 308.8 248.8 309.3 249.6C309.9 250.3 303.2 251.6 300.2 252.3C297.1 253.1 293.9 253.7 291.0 254.2C288.1 254.6 285.5 255.3 283.0 255.1C280.5 254.8 278.0 254.0 276.1 252.8C274.2 251.6 273.0 250.1 271.5 247.7C270.0 245.4 266.5 239.1 266.9 238.6Z" fill="#f8d08f"/>
<path d="M280.8 165.8C281.1 164.3 282.9 161.8 284.5 160.5C286.0 159.2 287.9 158.2 290.3 157.9C292.6 157.6 296.3 158.4 298.7 158.6C301.0 158.9 303.7 158.3 304.4 159.5C305.1 160.7 304.5 164.9 302.9 165.8C301.2 166.6 296.9 164.7 294.5 164.7C292.0 164.7 290.1 165.0 288.2 165.8C286.2 166.6 284.1 169.4 282.9 169.4C281.7 169.4 280.5 167.3 280.8 165.8Z" fill="#fbe6c6"/>
<path d="M307.1 156.3C307.8 154.2 309.5 153.2 311.3 152.1C313.0 151.1 315.5 150.2 317.6 150.0C319.7 149.8 322.8 148.9 323.9 151.1C324.9 153.2 324.9 160.0 323.9 162.6C322.8 165.2 319.7 165.6 317.6 166.8C315.5 168.0 313.0 170.3 311.3 170.0C309.5 169.6 307.8 167.0 307.1 164.7C306.4 162.4 306.4 158.4 307.1 156.3Z" fill="#fbe3c0"/>
<path d="M340.0 154.2C340.9 152.6 344.4 153.4 346.3 153.8C348.2 154.1 351.0 155.6 352.6 156.5C354.2 157.4 355.6 159.5 356.8 159.7C358.1 159.8 359.6 157.4 361.0 157.6C362.4 157.7 365.2 159.7 366.3 160.7C367.4 161.8 367.1 163.9 368.4 164.5C369.6 165.1 373.0 164.4 374.7 164.9C376.4 165.5 378.5 166.7 379.9 168.1C381.4 169.5 384.2 173.0 384.2 174.4C384.2 175.8 381.8 177.5 379.9 177.3C378.1 177.1 374.4 174.4 371.5 173.1C368.7 171.9 364.2 170.0 361.0 168.9C357.9 167.8 353.7 166.4 350.5 165.8C347.4 165.1 341.6 166.5 340.0 164.7C338.4 163.0 339.1 155.8 340.0 154.2Z" fill="#f8cdb0"/>
<path d="M264.0 181.5C264.7 178.3 265.9 176.5 267.1 174.7C268.4 173.0 270.0 171.5 271.5 171.0C273.1 170.6 275.4 171.0 276.6 172.1C277.8 173.1 278.7 175.2 278.7 177.3C278.7 179.4 277.6 182.6 276.6 184.7C275.5 186.8 273.8 188.2 272.4 189.9C271.0 191.7 269.4 193.1 268.2 195.2C267.0 197.3 265.9 202.7 265.0 202.6C264.1 202.4 263.1 197.7 262.9 194.2C262.7 190.6 263.3 184.8 264.0 181.5Z" fill="#fbdcb0"/>
<path d="M280.6 170.6C281.8 170.5 285.5 169.7 288.2 170.0C290.8 170.2 294.4 170.9 296.6 172.1C298.8 173.2 300.5 176.0 301.3 176.8" fill="none" stroke="#f0a282" stroke-width="2.6" stroke-linecap="round" stroke-linejoin="round"/>
<path d="M271.9 189.9C272.7 188.6 274.1 187.7 275.5 187.8C277.0 188.0 278.4 188.8 279.2 190.5C280.1 192.2 280.2 194.3 279.7 196.3C279.3 198.3 278.5 199.8 277.1 200.5C275.7 201.1 274.1 200.6 272.9 199.4C271.7 198.3 271.3 196.6 271.1 194.7C270.9 192.8 271.0 191.3 271.9 189.9Z" fill="#fdeee6"/>
<path d="M262.9 200.3C263.8 201.7 266.3 206.0 268.2 208.7C270.1 211.4 273.4 215.2 274.5 216.6" fill="none" stroke="#f2ac6c" stroke-width="2.2" stroke-linecap="round" stroke-linejoin="round"/>
<path d="M257.7 207.6C258.4 209.2 260.1 214.1 261.9 217.1C263.6 220.1 267.1 224.1 268.2 225.5" fill="none" stroke="#f2ac6c" stroke-width="1.6" stroke-linecap="round" stroke-linejoin="round"/>
<path d="M261.9 232.8C262.9 233.7 265.6 236.6 268.2 238.1C270.8 239.6 276.1 241.2 277.6 241.8" fill="none" stroke="#f0a070" stroke-width="3.2" stroke-linecap="round" stroke-linejoin="round"/>
<path d="M340.8 163.7C341.4 161.9 343.5 160.7 345.0 160.5C346.5 160.3 348.7 161.0 349.7 162.6C350.8 164.2 351.5 167.7 351.3 170.0C351.1 172.3 349.9 174.9 348.7 176.3C347.4 177.7 345.2 177.5 343.9 178.4C342.6 179.3 341.5 181.9 340.8 181.5C340.1 181.2 339.6 178.0 339.7 176.3C339.8 174.5 341.1 173.1 341.3 171.0C341.5 168.9 340.2 165.4 340.8 163.7Z" fill="#fdf3ea"/>
<path d="M366.8 166.8C367.6 165.9 370.1 165.1 371.5 165.8C372.9 166.5 374.9 169.3 375.2 171.0C375.6 172.8 374.6 175.6 373.6 176.3C372.7 177.0 370.6 176.1 369.4 175.2C368.3 174.4 367.2 172.4 366.8 171.0C366.4 169.6 366.0 167.7 366.8 166.8Z" fill="#fdeee4"/>
<path d="M342.6 161.6C343.3 159.7 346.0 159.3 347.4 160.0C348.8 160.7 350.5 163.2 351.0 165.8C351.6 168.3 351.3 173.5 350.5 175.2C349.7 177.0 347.5 177.0 346.3 176.3C345.1 175.6 343.8 173.5 343.2 171.0C342.5 168.6 341.9 163.4 342.6 161.6Z" fill="#fdf1e6"/>
<path d="M284.3 199.6C286.2 197.0 287.4 195.8 289.8 194.6C292.3 193.3 295.8 192.9 299.0 192.3C302.3 191.7 305.9 190.6 309.3 190.9C312.8 191.2 317.8 190.9 319.6 193.9C321.5 196.8 320.4 201.7 320.6 208.8C320.7 215.8 320.7 229.4 320.6 236.3C320.4 243.2 321.5 247.8 319.6 250.0C317.8 252.2 313.0 250.0 309.3 249.6C305.7 249.2 301.3 249.0 297.9 247.7C294.4 246.5 291.4 244.5 288.7 242.0C286.0 239.5 283.5 236.3 281.8 232.8C280.1 229.4 278.9 225.2 278.4 221.4C277.9 217.6 277.8 213.5 278.8 209.9C279.8 206.3 282.5 202.2 284.3 199.6Z" fill="#ef957b"/>
<path d="M317.4 236.3C317.3 229.5 317.3 216.0 317.4 208.8C317.5 201.6 315.8 195.5 317.8 193.2C319.9 190.9 325.9 195.2 329.8 195.0C333.7 194.8 337.0 192.7 341.2 191.8C345.4 190.9 351.0 189.5 355.0 189.5C359.0 189.5 362.3 190.0 365.3 191.8C368.3 193.6 371.1 196.8 372.8 200.1C374.6 203.3 375.5 207.7 375.6 211.5C375.7 215.3 374.6 219.5 373.3 223.0C372.0 226.4 369.9 229.5 367.6 232.1C365.3 234.8 362.8 237.0 359.6 239.0C356.3 241.1 351.5 243.4 348.1 244.5C344.7 245.7 342.0 245.3 338.9 245.9C335.9 246.5 333.3 247.6 329.8 248.2C326.2 248.8 319.9 251.6 317.8 249.6C315.8 247.6 317.5 243.1 317.4 236.3Z" fill="#ef977c"/>
<path d="M376.8 168.4C377.3 167.7 380.3 168.4 381.5 169.4C382.8 170.5 384.1 173.6 384.2 174.7C384.2 175.8 383.0 176.5 382.0 176.3C381.1 176.1 379.2 175.0 378.4 173.7C377.5 172.3 376.3 169.1 376.8 168.4Z" fill="#f7e54a"/>
<path d="M386.3 190.5C387.0 188.4 391.2 185.7 392.6 185.7C393.9 185.7 393.4 188.6 394.1 190.5C394.8 192.3 396.2 194.1 396.8 196.8C397.3 199.5 398.5 205.1 397.3 206.8C396.1 208.4 391.0 208.2 389.4 206.8C387.8 205.4 388.4 201.1 387.8 198.4C387.3 195.6 385.5 192.6 386.3 190.5Z" fill="#f7e54a"/>
<path d="M386.3 195.0C387.9 193.8 395.4 193.9 397.3 195.0C399.2 196.1 397.9 199.0 397.6 201.3C397.3 203.6 396.5 206.2 395.5 208.7C394.5 211.1 392.8 213.9 391.5 216.0C390.2 218.1 388.9 221.0 387.8 221.3C386.8 221.5 385.2 219.5 385.2 217.6C385.2 215.7 387.5 212.3 387.8 209.7C388.2 207.2 387.6 204.8 387.3 202.4C387.0 199.9 384.6 196.2 386.3 195.0Z" fill="#f7e54a"/>
<path d="M393.1 195.0C393.6 193.6 396.5 193.9 397.3 195.0C398.0 196.1 397.9 199.1 397.6 201.3C397.3 203.6 396.5 206.9 395.7 208.5C395.0 210.0 393.4 211.6 393.1 210.8C392.8 209.9 394.1 206.0 394.1 203.4C394.1 200.8 392.6 196.4 393.1 195.0Z" fill="#fdf3c6"/>
<path d="M386.3 185.7C386.8 184.8 389.3 184.0 390.5 184.2C391.6 184.3 392.9 185.7 393.1 186.8C393.3 187.8 392.5 189.9 391.5 190.5C390.5 191.0 388.2 190.7 387.3 189.9C386.4 189.2 385.7 186.7 386.3 185.7Z" fill="#fdf5d0"/>
<path d="M356.8 181.5C357.7 179.6 363.3 178.4 366.3 178.4C369.3 178.4 372.6 179.6 374.7 181.5C376.8 183.5 378.0 185.7 378.9 189.9C379.8 194.2 382.0 204.0 379.9 206.8C377.8 209.6 368.7 208.5 366.3 206.8C363.8 205.0 366.1 199.1 365.2 196.3C364.4 193.5 362.4 192.4 361.0 189.9C359.6 187.5 355.9 183.5 356.8 181.5Z" fill="#f5b384"/>
<path d="M366.3 195.0C368.3 193.6 377.3 193.6 379.9 195.0C382.6 196.4 382.0 200.3 382.0 203.4C382.0 206.6 381.2 210.8 379.9 213.9C378.7 217.1 376.8 219.7 374.7 222.3C372.6 225.0 369.6 227.6 367.3 229.7C365.1 231.8 361.6 235.8 361.0 234.9C360.5 234.1 363.1 227.9 364.2 224.4C365.3 220.9 366.9 217.4 367.5 213.9C368.2 210.4 368.1 206.6 367.9 203.4C367.6 200.3 364.3 196.4 366.3 195.0Z" fill="#f5b384"/>
<path d="M369.4 199.2C370.5 198.2 375.4 199.2 376.8 201.3C378.2 203.4 378.4 208.7 377.8 211.8C377.3 215.0 375.4 217.8 373.6 220.2C371.9 222.7 368.1 227.2 367.3 226.5C366.5 225.8 368.4 219.2 368.9 216.0C369.4 212.9 370.4 210.4 370.5 207.6C370.6 204.8 368.4 200.3 369.4 199.2Z" fill="#f4a990"/>
<path d="M343.2 196.3C344.4 195.6 347.9 193.1 350.5 192.6C353.1 192.0 356.6 192.3 358.9 193.1C361.3 193.9 363.3 195.3 364.7 197.3C366.1 199.3 367.1 203.7 367.5 205.0" fill="none" stroke="#fbe0c2" stroke-width="1.6" stroke-linecap="round" stroke-linejoin="round"/>
<path d="M367.5 195.0C367.6 196.6 368.5 201.0 368.2 204.5C367.9 208.0 366.9 212.5 365.8 216.0C364.7 219.5 362.3 223.9 361.6 225.5" fill="none" stroke="#fbd8b8" stroke-width="1.3" stroke-linecap="round" stroke-linejoin="round"/>
<path d="M322.0 236.0C319.5 239.1 319.9 249.1 321.0 251.2C322.1 253.3 327.6 251.5 330.0 251.8C332.4 252.1 336.4 252.8 339.0 253.4C341.6 254.0 347.1 255.9 349.5 256.0C351.9 256.1 355.4 254.9 357.3 254.0C359.2 253.1 362.3 250.8 364.0 249.5C365.7 248.2 369.2 245.6 370.3 244.3C371.4 243.0 371.0 241.0 372.0 240.0C373.0 239.0 376.3 237.5 378.0 236.5C379.7 235.5 384.3 234.0 384.6 232.6C384.9 231.2 383.3 226.9 380.0 226.0C376.7 225.1 365.3 225.7 360.0 226.0C354.7 226.3 345.1 226.7 340.0 228.0C334.9 229.3 324.5 232.9 322.0 236.0Z" fill="#f0a088"/>
<path d="M357.8 247.4C358.7 245.8 361.9 244.6 364.0 243.4C366.1 242.2 369.1 240.2 370.3 240.2C371.5 240.2 372.0 242.2 371.3 243.6C370.6 245.0 368.1 247.0 366.0 248.6C363.9 250.2 360.0 253.4 358.6 253.2C357.2 253.0 356.9 249.0 357.8 247.4Z" fill="#f8d4a6"/>
<path d="M340.0 247.0C341.5 246.6 347.2 250.3 350.0 250.5C352.8 250.7 355.8 247.5 357.0 248.0C358.2 248.5 358.6 252.3 357.3 253.6C356.1 254.9 352.2 255.7 349.5 255.6C346.8 255.5 342.6 254.4 341.0 253.0C339.4 251.6 338.5 247.4 340.0 247.0Z" fill="#f4b49a"/>
<path d="M361.0 251.8C360.3 251.6 362.6 247.4 364.2 245.5C365.8 243.5 369.3 240.7 370.5 240.2C371.7 239.7 371.9 241.4 371.5 242.5C371.2 243.6 370.3 245.2 368.6 246.7C366.8 248.3 361.8 252.0 361.0 251.8Z" fill="#f8d2a4"/>
<path d="M371.5 226.5C372.9 225.3 377.3 225.1 379.9 224.6C382.6 224.2 386.3 223.6 387.5 223.9C388.8 224.3 388.1 225.3 387.5 226.7C387.0 228.2 385.9 231.0 384.2 232.6C382.4 234.3 379.0 235.8 376.8 236.8C374.6 237.9 372.4 238.9 370.7 238.9C368.9 239.0 366.1 238.2 366.3 237.0C366.4 235.9 370.7 233.5 371.5 231.8C372.4 230.0 370.1 227.7 371.5 226.5Z" fill="#f8d8c0"/>
<path d="M370.5 229.7C372.2 227.9 377.3 227.2 379.9 226.5C382.6 225.9 385.7 225.2 386.3 226.0C386.8 226.8 384.9 229.7 383.1 231.3C381.3 232.8 378.0 234.5 375.7 235.5C373.5 236.4 370.3 238.0 369.4 237.0C368.6 236.1 368.7 231.4 370.5 229.7Z" fill="#f3a98e"/>
<path d="M274.9 228.3C275.5 227.1 278.2 229.4 280.7 231.7C283.2 234.0 286.6 239.4 289.8 242.0C293.1 244.6 299.6 246.2 300.2 247.3C300.7 248.3 296.0 248.4 293.3 248.2C290.6 248.0 286.8 247.5 284.1 245.9C281.4 244.3 278.8 241.5 277.2 238.6C275.7 235.6 274.4 229.4 274.9 228.3Z" fill="#ea8a6b"/>
<path d="M286.9 222.6C286.9 219.1 292.0 216.2 294.6 216.9C297.1 217.5 299.4 222.6 302.2 226.4C305.1 230.3 308.9 236.2 311.8 239.8C314.6 243.5 320.4 247.3 319.4 248.4C318.5 249.5 310.2 248.3 306.0 246.5C301.9 244.8 297.8 241.9 294.6 237.9C291.4 233.9 286.9 226.1 286.9 222.6Z" fill="#e88a6e" opacity="0.8"/>
<path d="M323.2 218.8C324.6 215.9 329.9 213.7 332.8 215.0C335.7 216.2 338.8 222.0 340.4 226.4C342.0 230.9 343.3 237.9 342.3 241.7C341.4 245.5 337.6 248.3 334.7 249.4C331.8 250.5 326.8 251.3 325.2 248.4C323.5 245.5 325.1 237.1 324.8 232.2C324.4 227.2 321.9 221.7 323.2 218.8Z" fill="#e88a6e" opacity="0.7"/>
<path d="M283.1 199.7C284.1 197.0 289.0 195.5 292.7 194.9C296.3 194.3 302.7 194.1 305.1 195.9C307.5 197.6 308.1 202.9 307.0 205.4C305.9 208.0 301.7 210.2 298.4 211.2C295.1 212.1 289.5 213.1 286.9 211.2C284.4 209.2 282.2 202.4 283.1 199.7Z" fill="#f3a37c" opacity="0.8"/>
<path d="M294.5 208.7C295.5 207.9 297.7 207.2 299.8 207.1C301.9 207.0 303.9 207.4 305.0 208.1C306.2 208.9 306.6 210.1 305.6 210.8C304.5 211.5 301.9 211.6 299.8 211.6C297.7 211.6 296.1 211.4 295.0 210.8C294.0 210.2 293.6 209.4 294.5 208.7Z" fill="#f7a052"/>
<path d="M289.3 229.7C289.8 231.3 290.8 236.2 292.4 239.2C294.0 242.1 297.7 246.2 298.7 247.6" fill="none" stroke="#e98a64" stroke-width="1.8" stroke-linecap="round" stroke-linejoin="round"/>
<path d="M305.0 231.8C305.6 233.2 307.1 237.6 308.2 240.2C309.3 242.8 311.0 246.3 311.5 247.6" fill="none" stroke="#e98a64" stroke-width="1.6" stroke-linecap="round" stroke-linejoin="round"/>
<path d="M328.2 229.7C328.5 231.3 329.4 236.2 330.3 239.2C331.1 242.1 332.9 246.2 333.4 247.6" fill="none" stroke="#e98a64" stroke-width="1.4" stroke-linecap="round" stroke-linejoin="round"/>
<path d="M347.1 219.2C347.8 220.4 351.3 223.6 351.3 226.5C351.3 229.5 347.8 235.3 347.1 237.0" fill="none" stroke="#f8c8a2" stroke-width="1.2" stroke-linecap="round" stroke-linejoin="round"/>
<path d="M356.5 218.7C356.8 219.8 358.6 222.8 358.1 225.5C357.6 228.2 354.2 233.4 353.4 234.9" fill="none" stroke="#f8c8a2" stroke-width="1.2" stroke-linecap="round" stroke-linejoin="round"/>
<path d="M337.1 241.3 L340.8 248.1" fill="none" stroke="#f8c8a2" stroke-width="1.0" stroke-linecap="round" stroke-linejoin="round"/>
<path d="M283.1 205.5C282.9 208.1 281.4 216.4 281.8 221.3C282.3 226.2 285.3 232.7 286.0 234.9" fill="none" stroke="#f8c4aa" stroke-width="1.0" stroke-linecap="round" stroke-linejoin="round"/>
<path d="M288.2 226.5 L290.5 237.0" fill="none" stroke="#f8c4aa" stroke-width="0.9" stroke-linecap="round" stroke-linejoin="round"/>
<path d="M294.7 227.8C294.8 229.3 294.7 234.3 295.7 237.0C296.7 239.8 299.1 242.4 300.8 244.2C302.5 246.0 305.1 247.0 306.0 247.6" fill="none" stroke="#f6d73c" stroke-width="2.7" stroke-linecap="round" stroke-linejoin="round"/>
<path d="M312.5 240.4 L316.5 246.5" fill="none" stroke="#f6d73c" stroke-width="2.4" stroke-linecap="round" stroke-linejoin="round"/>
<path d="M278.7 241.8C279.9 242.4 283.8 244.7 286.0 245.7C288.3 246.6 291.3 247.2 292.4 247.6" fill="none" stroke="#f8d468" stroke-width="1.6" stroke-linecap="round" stroke-linejoin="round"/>
<path d="M379.1 204.5C379.4 205.2 380.6 207.1 380.6 208.7C380.5 210.2 379.0 212.5 378.9 213.9C378.8 215.4 379.8 216.7 379.9 217.3" fill="none" stroke="#f5d840" stroke-width="1.4" stroke-linecap="round" stroke-linejoin="round"/>
<path d="M384.8 187.0C385.5 188.7 388.7 194.1 389.4 197.3C390.0 200.6 389.0 204.9 388.9 206.5" fill="none" stroke="#f8ec98" stroke-width="1.4" stroke-linecap="round" stroke-linejoin="round"/>
<path d="M287.9 178.7C290.0 176.2 296.6 175.4 302.2 174.5C307.8 173.5 315.0 173.1 321.3 172.9C327.7 172.7 334.7 172.8 340.4 173.3C346.2 173.8 352.9 174.0 355.7 175.8C358.6 177.6 358.0 181.8 357.6 184.4C357.3 186.9 357.3 189.7 353.8 191.1C350.3 192.5 342.0 192.8 336.6 193.0C331.2 193.2 327.1 192.5 321.3 192.4C315.6 192.3 307.5 193.0 302.2 192.4C297.0 191.9 292.2 191.5 289.8 189.2C287.4 186.9 285.8 181.1 287.9 178.7Z" fill="#f3b885" opacity="0.85"/>
<path d="M281.6 207.3C282.1 205.6 282.2 199.4 284.6 196.8C287.1 194.2 292.1 192.7 296.5 191.7C300.8 190.6 308.4 190.7 310.8 190.5" fill="none" stroke="#fbd9b8" stroke-width="1.3" stroke-linecap="round" stroke-linejoin="round"/>
<path d="M338.9 197.8C340.1 196.9 343.0 193.5 346.2 192.4C349.3 191.3 354.0 190.5 357.6 191.1C361.3 191.7 366.4 195.1 368.1 195.9" fill="none" stroke="#fbd9b8" stroke-width="1.3" stroke-linecap="round" stroke-linejoin="round"/>
<path d="M290.3 181.0C290.5 180.2 291.5 179.3 292.4 180.0C293.3 180.7 294.2 183.9 295.6 185.2C297.0 186.6 300.1 187.3 300.8 188.1C301.5 188.8 300.8 189.8 299.8 189.7C298.7 189.7 295.9 188.7 294.5 187.8C293.1 187.0 292.1 185.8 291.4 184.7C290.7 183.6 290.1 181.8 290.3 181.0Z" fill="#c0623a"/>
<path d="M299.8 177.5 L305.0 187.0" fill="none" stroke="#c8553a" stroke-width="2.61" stroke-linecap="round" stroke-linejoin="round"/>
<path d="M305.6 181.5 L309.2 188.4" fill="none" stroke="#d8703a" stroke-width="2.03" stroke-linecap="round" stroke-linejoin="round"/>
<path d="M310.5 178.6 L315.3 189.7" fill="none" stroke="#e8853a" stroke-width="2.61" stroke-linecap="round" stroke-linejoin="round"/>
<path d="M315.7 176.5 L317.9 186.8" fill="none" stroke="#c8503a" stroke-width="2.03" stroke-linecap="round" stroke-linejoin="round"/>
<path d="M323.9 176.3 L323.1 184.7" fill="none" stroke="#f0c040" stroke-width="2.9" stroke-linecap="round" stroke-linejoin="round"/>
<path d="M328.2 177.3 L326.0 185.7" fill="none" stroke="#e8903a" stroke-width="2.32" stroke-linecap="round" stroke-linejoin="round"/>
<path d="M326.3 178.4 L326.5 180.7" fill="none" stroke="#c8403a" stroke-width="1.74" stroke-linecap="round" stroke-linejoin="round"/>
<path d="M330.3 181.5 L329.2 186.8" fill="none" stroke="#f0c848" stroke-width="2.03" stroke-linecap="round" stroke-linejoin="round"/>
<path d="M333.6 184.9 L336.6 192.0" fill="none" stroke="#b85038" stroke-width="2.175" stroke-linecap="round" stroke-linejoin="round"/>
<path d="M338.9 176.5 L340.8 185.5" fill="none" stroke="#a8402f" stroke-width="2.175" stroke-linecap="round" stroke-linejoin="round"/>
<path d="M342.9 181.5 L338.7 189.1" fill="none" stroke="#c05a3a" stroke-width="1.885" stroke-linecap="round" stroke-linejoin="round"/>
<path d="M349.7 178.6 L352.9 185.5" fill="none" stroke="#a8482f" stroke-width="2.61" stroke-linecap="round" stroke-linejoin="round"/>
<path d="M294.5 176.3 L297.7 181.5" fill="none" stroke="#e0a060" stroke-width="1.74" stroke-linecap="round" stroke-linejoin="round"/>
<path d="M319.7 176.8 L320.8 184.7" fill="none" stroke="#e06a3a" stroke-width="1.74" stroke-linecap="round" stroke-linejoin="round"/>
<path d="M345.5 176.3 L347.1 181.5" fill="none" stroke="#e8a070" stroke-width="1.45" stroke-linecap="round" stroke-linejoin="round"/>
<path d="M349.7 177.5 L351.4 185.5" fill="none" stroke="#a85035" stroke-width="1.6" stroke-linecap="round" stroke-linejoin="round"/>
<path d="M312.9 199.2C314.0 198.2 316.8 197.6 318.7 197.6C320.5 197.6 323.9 197.7 325.2 199.2C326.5 200.7 327.1 205.5 327.6 207.6C328.1 209.7 329.2 212.3 328.7 213.4C328.1 214.5 325.4 215.1 323.9 215.2C322.4 215.3 320.2 214.2 318.7 213.9C317.1 213.6 315.0 212.5 313.6 213.1C312.3 213.6 310.4 217.2 309.4 217.5C308.5 217.8 307.4 216.1 307.5 215.0C307.7 213.8 309.7 211.3 310.3 209.7C310.9 208.1 311.1 206.0 311.5 204.5C311.9 202.9 311.8 200.2 312.9 199.2Z" fill="#fffaf5"/>
<path d="M310.3 191.8C311.2 192.8 314.0 195.5 315.5 197.3C317.0 199.1 318.3 201.0 319.2 202.6C320.1 204.1 320.5 206.1 320.8 206.8" fill="none" stroke="#fffaf5" stroke-width="2.0" stroke-linecap="round" stroke-linejoin="round"/>
<path d="M329.4 189.9C328.7 191.0 326.6 194.2 325.2 196.3C323.9 198.4 322.2 200.8 321.3 202.6C320.4 204.3 320.0 206.1 319.7 206.8" fill="none" stroke="#fffaf5" stroke-width="2.0" stroke-linecap="round" stroke-linejoin="round"/>
<path d="M344.4 201.3C345.0 202.9 347.0 210.9 348.0 210.8C349.0 210.6 350.1 202.0 350.5 200.3" fill="none" stroke="#fff4ea" stroke-width="0.8" stroke-linecap="round" stroke-linejoin="round"/>
<path d="M344.2 215.0 L364.2 215.2" fill="none" stroke="#fbe2cf" stroke-width="0.7" stroke-linecap="round" stroke-linejoin="round"/>
<circle cx="293.4" cy="135.5" r="2.0" fill="#d8e040"/>
<circle cx="290.6" cy="151.4" r="1.5" fill="#c8d890"/>
<circle cx="247.2" cy="221.1" r="2.9" fill="#e2ea50"/>
<circle cx="395.5" cy="230.2" r="3.4" fill="#e8ee68"/>
<path d="M382.0 236.2C382.9 236.1 385.6 235.6 387.3 235.4C389.1 235.1 391.7 234.8 392.6 234.7" fill="none" stroke="#b8cc40" stroke-width="0.9" stroke-linecap="round" stroke-linejoin="round"/>
<path d="M253.2 295.1C252.8 295.7 251.6 297.6 250.8 298.9C250.1 300.2 249.1 302.3 248.8 303.0" fill="none" stroke="#c8dc3c" stroke-width="2.1" stroke-linecap="round" stroke-linejoin="round"/>
<path d="M253.9 313.0 L254.4 319.2" fill="none" stroke="#a0b830" stroke-width="1.6" stroke-linecap="round" stroke-linejoin="round"/>
<circle cx="297.8" cy="288.6" r="2.0" fill="#eaf0b8"/>
<circle cx="279.8" cy="317.8" r="3.0" fill="#d0e040"/>
<circle cx="279.4" cy="317.1" r="1.4" fill="#e6ee88"/>
<path d="M298.4 310.6C299.8 310.1 304.4 310.0 307.3 310.9C310.2 311.9 313.8 313.4 315.9 316.1C318.1 318.8 320.5 326.1 320.2 326.9C319.9 327.8 316.6 323.2 314.2 321.3C311.8 319.3 308.2 316.7 305.6 315.4C303.0 314.2 299.9 314.5 298.7 313.7C297.5 312.9 296.9 311.1 298.4 310.6Z" fill="#d8e63c"/>
<path d="M351.9 256.9C352.4 256.6 357.4 262.3 359.3 265.8C361.3 269.3 362.5 273.9 363.7 277.9C364.8 281.9 365.7 285.6 366.1 289.9C366.4 294.2 365.2 299.2 365.7 303.7C366.2 308.2 369.0 315.6 369.2 317.1C369.3 318.7 367.7 315.2 366.8 313.0C365.8 310.8 364.2 307.6 363.5 303.7C362.8 299.9 363.0 294.2 362.4 289.9C361.9 285.6 361.4 281.6 360.4 277.9C359.4 274.1 357.8 271.0 356.4 267.5C355.0 264.0 351.5 257.2 351.9 256.9Z" fill="#c5d935"/>
<path d="M352.6 257.9C353.6 259.5 357.0 264.1 358.5 267.5C360.0 271.0 360.8 275.0 361.6 278.7C362.3 282.5 362.7 288.1 363.0 289.9" fill="none" stroke="#6a7a28" stroke-width="0.5" stroke-linecap="round" stroke-linejoin="round"/>
<circle cx="386.4" cy="268.1" r="4.5" fill="#d8e850"/>
<circle cx="386.4" cy="268.1" r="3.6" fill="#eef58e"/>
<path d="M396.4 253.8C396.8 254.3 398.2 256.0 398.9 257.2C399.7 258.4 400.4 260.4 400.7 261.0" fill="none" stroke="#d8e850" stroke-width="1.3" stroke-linecap="round" stroke-linejoin="round"/>
<path d="M403.3 249.5C403.8 250.0 405.7 251.2 406.7 252.4C407.7 253.5 408.8 255.7 409.3 256.4" fill="none" stroke="#d8e850" stroke-width="1.3" stroke-linecap="round" stroke-linejoin="round"/>
<path d="M407.7 265.8C407.6 267.3 407.9 271.6 407.0 274.4C406.2 277.3 403.3 281.6 402.6 283.0" fill="none" stroke="#d8e850" stroke-width="1.5" stroke-linecap="round" stroke-linejoin="round"/>
<path d="M397.4 253.3 L399.9 259.5" fill="none" stroke="#d8e850" stroke-width="1.2" stroke-linecap="round" stroke-linejoin="round"/>
<path d="M403.5 249.7 L407.8 254.6" fill="none" stroke="#d8e850" stroke-width="1.2" stroke-linecap="round" stroke-linejoin="round"/>
<path d="M219.2 356.5C218.4 358.5 215.3 363.9 214.1 368.7C213.0 373.4 212.1 380.1 212.1 384.9C212.1 389.6 213.3 393.5 214.1 397.0C215.0 400.6 216.8 404.6 217.4 406.2" fill="none" stroke="#c8e030" stroke-width="1.3" stroke-linecap="round" stroke-linejoin="round"/>
<path d="M218.2 347.4C217.0 349.6 212.7 356.0 211.1 360.5C209.5 365.1 208.8 371.4 208.5 374.7C208.1 378.1 209.0 379.8 209.1 380.8" fill="none" stroke="#56641f" stroke-width="0.8" stroke-linecap="round" stroke-linejoin="round"/>
<path d="M208.1 350.4 L206.4 354.9" fill="none" stroke="#56641f" stroke-width="0.7" stroke-linecap="round" stroke-linejoin="round"/>
<path d="M216.2 417.3 L220.2 423.8" fill="none" stroke="#c8e030" stroke-width="1.3" stroke-linecap="round" stroke-linejoin="round"/>
<path d="M210.1 405.1 L213.1 415.3" fill="none" stroke="#56641f" stroke-width="0.8" stroke-linecap="round" stroke-linejoin="round"/>
<circle cx="233.4" cy="387.5" r="4.0" fill="#d8e648"/>
<circle cx="233.0" cy="386.9" r="2.0" fill="#e8f080"/>
<path d="M293.2 400.1C294.2 401.3 297.9 404.6 299.3 407.2C300.6 409.7 300.6 412.6 301.3 415.3C302.0 417.9 303.0 421.7 303.3 423.0" fill="none" stroke="#c8dc3c" stroke-width="0.9" stroke-linecap="round" stroke-linejoin="round"/>
<circle cx="297.7" cy="411.6" r="1.4" fill="#e0e060"/>
<circle cx="307.8" cy="412.8" r="1.7" fill="#e0e060"/>
<path d="M307.8 414.3 L308.6 423.4" fill="none" stroke="#c8dc3c" stroke-width="0.8" stroke-linecap="round" stroke-linejoin="round"/>
<circle cx="338.4" cy="327.1" r="1.2" fill="#d8e040"/>
<path d="M410.3 353.4 L416.4 359.5" fill="none" stroke="#e0e0a0" stroke-width="0.8" stroke-linecap="round" stroke-linejoin="round"/>
<path d="M419.4 367.0 L420.0 369.9" fill="none" stroke="#6a6a40" stroke-width="0.7" stroke-linecap="round" stroke-linejoin="round"/>
<path d="M425.9 363.6 L432.0 372.3" fill="none" stroke="#e0e848" stroke-width="1.6" stroke-linecap="round" stroke-linejoin="round"/>
<rect x="319" y="104" width="2" height="320" fill="#fff"/>
</svg>
</div>
</body>
</html>
